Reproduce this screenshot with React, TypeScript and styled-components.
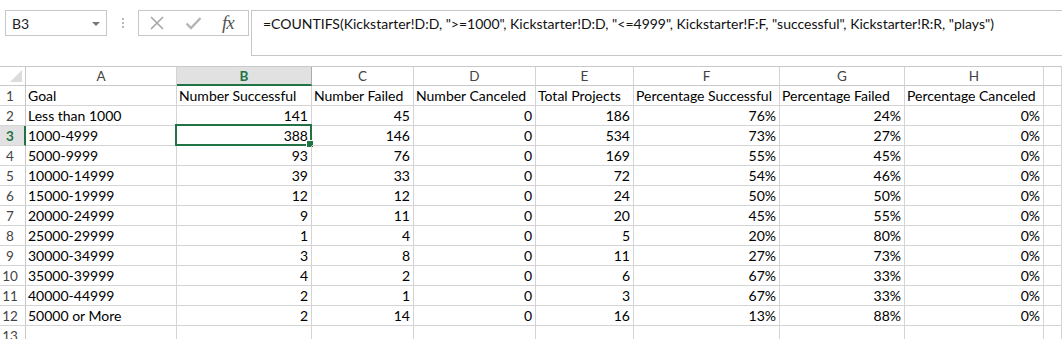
import { Fragment } from 'react';
import styled, { createGlobalStyle } from 'styled-components';

const GREEN = '#217346';
const GRID = '#d4d4d4';
const HEAD_LINE = '#c8c8c8';
const FONT = `Lato, "Open Sans", "Liberation Sans", sans-serif`;

const COLS = ['A', 'B', 'C', 'D', 'E', 'F', 'G', 'H', ''];
const WIDTHS = '26px 151px 135px 102px 122px 98px 146px 125px 139px 1fr';

type Row = (string | number)[];

const ROWS: Row[] = [
  ['Goal', 'Number Successful', 'Number Failed', 'Number Canceled', 'Total Projects', 'Percentage Successful', 'Percentage Failed', 'Percentage Canceled'],
  ['Less than 1000', 141, 45, 0, 186, '76%', '24%', '0%'],
  ['1000-4999', 388, 146, 0, 534, '73%', '27%', '0%'],
  ['5000-9999', 93, 76, 0, 169, '55%', '45%', '0%'],
  ['10000-14999', 39, 33, 0, 72, '54%', '46%', '0%'],
  ['15000-19999', 12, 12, 0, 24, '50%', '50%', '0%'],
  ['20000-24999', 9, 11, 0, 20, '45%', '55%', '0%'],
  ['25000-29999', 1, 4, 0, 5, '20%', '80%', '0%'],
  ['30000-34999', 3, 8, 0, 11, '27%', '73%', '0%'],
  ['35000-39999', 4, 2, 0, 6, '67%', '33%', '0%'],
  ['40000-44999', 2, 1, 0, 3, '67%', '33%', '0%'],
  ['50000 or More', 2, 14, 0, 16, '13%', '88%', '0%'],
  ['', '', '', '', '', '', '', ''],
];

const FORMULA =
  '=COUNTIFS(Kickstarter!D:D, ">=1000", Kickstarter!D:D, "<=4999", Kickstarter!F:F, "successful", Kickstarter!R:R, "plays")';

const Global = createGlobalStyle`
  html, body { margin: 0; background: #fff; overflow: hidden; }
  * { box-sizing: border-box; }
`;

const Page = styled.div`
  width: 1062px;
  height: 339px;
  overflow: hidden;
  font-family: ${FONT};
  color: #000;
`;

const FormulaBar = styled.div`
  height: 66px;
  display: flex;
  align-items: flex-start;
  padding: 10px 0 0 5px;
`;

const NameBox = styled.div`
  width: 102px;
  height: 26px;
  border: 1px solid #c6c6c6;
  display: flex;
  align-items: center;
  justify-content: space-between;
  padding: 0 6px 0 6px;
  font-size: 14px;
  color: #222;
`;

const Caret = styled.span`
  width: 0;
  height: 0;
  border-left: 4px solid transparent;
  border-right: 4px solid transparent;
  border-top: 4px solid #777;
  margin-top: 2px;
`;

const Grip = styled.div`
  width: 31px;
  height: 26px;
  display: flex;
  flex-direction: column;
  align-items: center;
  justify-content: center;
  gap: 2px;
  span {
    width: 2px;
    height: 2px;
    background: #b8b8b8;
  }
`;

const ButtonBox = styled.div`
  width: 111px;
  height: 26px;
  border: 1px solid #c6c6c6;
  display: flex;
  align-items: center;
  padding: 0 0 0 10px;
  gap: 20px;
`;

const Fx = styled.span`
  font-family: "Liberation Serif", serif;
  font-style: italic;
  font-size: 19px;
  color: #555;
  letter-spacing: -1px;
`;

const FormulaInput = styled.div`
  flex: 1;
  height: 46px;
  margin-left: 2px;
  border: 1px solid #c6c6c6;
  border-right: none;
  padding: 4px 0 0 11px;
  font-size: 14px;
  color: #111;
  white-space: nowrap;
`;

const Grid = styled.div`
  display: grid;
  grid-template-columns: ${WIDTHS};
  border-top: 1px solid ${HEAD_LINE};
`;

const Corner = styled.div`
  height: 19px;
  border-right: 1px solid ${HEAD_LINE};
  border-bottom: 1px solid ${HEAD_LINE};
  position: relative;
  &::after {
    content: '';
    position: absolute;
    right: 3px;
    bottom: 3px;
    border-left: 12px solid transparent;
    border-bottom: 12px solid #dcdcdc;
  }
`;

const ColHead = styled.div<{ $active?: boolean }>`
  height: 19px;
  border-right: 1px solid ${({ $active }) => ($active ? '#ababab' : GRID)};
  border-bottom: ${({ $active }) => ($active ? `2px solid ${GREEN}` : `1px solid ${HEAD_LINE}`)};
  background: ${({ $active }) => ($active ? '#e1e1e1' : '#fff')};
  color: ${({ $active }) => ($active ? GREEN : '#444')};
  font-weight: ${({ $active }) => ($active ? 700 : 400)};
  font-size: 13.5px;
  text-align: center;
  line-height: ${({ $active }) => ($active ? '18px' : '19px')};
`;

const RowHead = styled.div<{ $active?: boolean }>`
  height: 20px;
  border-right: ${({ $active }) => ($active ? `2px solid ${GREEN}` : `1px solid ${HEAD_LINE}`)};
  border-bottom: 1px solid ${GRID};
  background: ${({ $active }) => ($active ? '#e1e1e1' : '#fff')};
  color: ${({ $active }) => ($active ? GREEN : '#444')};
  font-weight: ${({ $active }) => ($active ? 700 : 400)};
  font-size: 13.5px;
  text-align: center;
  padding-right: ${({ $active }) => ($active ? '4px' : '5px')};
  line-height: 20px;
`;

const Cell = styled.div<{ $num?: boolean }>`
  position: relative;
  height: 20px;
  border-right: 1px solid ${GRID};
  border-bottom: 1px solid ${GRID};
  font-size: 14px;
  line-height: 20px;
  padding: 0 3px 0 2px;
  white-space: nowrap;
  text-align: ${({ $num }) => ($num ? 'right' : 'left')};
`;

const Selection = styled.div`
  position: absolute;
  left: -2px;
  top: -2px;
  right: -1px;
  bottom: -1px;
  border: 2px solid ${GREEN};
  pointer-events: none;
  &::after {
    content: '';
    position: absolute;
    right: -4px;
    bottom: -4px;
    width: 6px;
    height: 6px;
    background: ${GREEN};
    border: 1px solid #fff;
  }
`;

function CrossIcon() {
  return (
    <svg width="16" height="16" viewBox="0 0 16 16">
      <path d="M2 2 L14 14 M14 2 L2 14" stroke="#a6a6a6" strokeWidth="1.6" fill="none" />
    </svg>
  );
}

function CheckIcon() {
  return (
    <svg width="17" height="14" viewBox="0 0 17 14">
      <path d="M1.5 7.5 L6 12 L15.5 2" stroke="#b4b4b4" strokeWidth="2.4" fill="none" />
    </svg>
  );
}

export default function App() {
  return (
    <Page>
      <Global />
      <FormulaBar>
        <NameBox>
          B3
          <Caret />
        </NameBox>
        <Grip>
          <span />
          <span />
          <span />
        </Grip>
        <ButtonBox>
          <CrossIcon />
          <CheckIcon />
          <Fx>fx</Fx>
        </ButtonBox>
        <FormulaInput>{FORMULA}</FormulaInput>
      </FormulaBar>
      <Grid>
        <Corner />
        {COLS.map((c) => (
          <ColHead key={c || 'I'} $active={c === 'B'}>
            {c}
          </ColHead>
        ))}
        {ROWS.map((row, r) => (
          <Fragment key={r}>
            <RowHead $active={r === 2}>{r + 1}</RowHead>
            {row.map((v, c) => (
              <Cell key={c} $num={r > 0 && c > 0}>
                {v}
                {r === 2 && c === 1 && <Selection />}
              </Cell>
            ))}
            <Cell />
          </Fragment>
        ))}
      </Grid>
    </Page>
  );
}
